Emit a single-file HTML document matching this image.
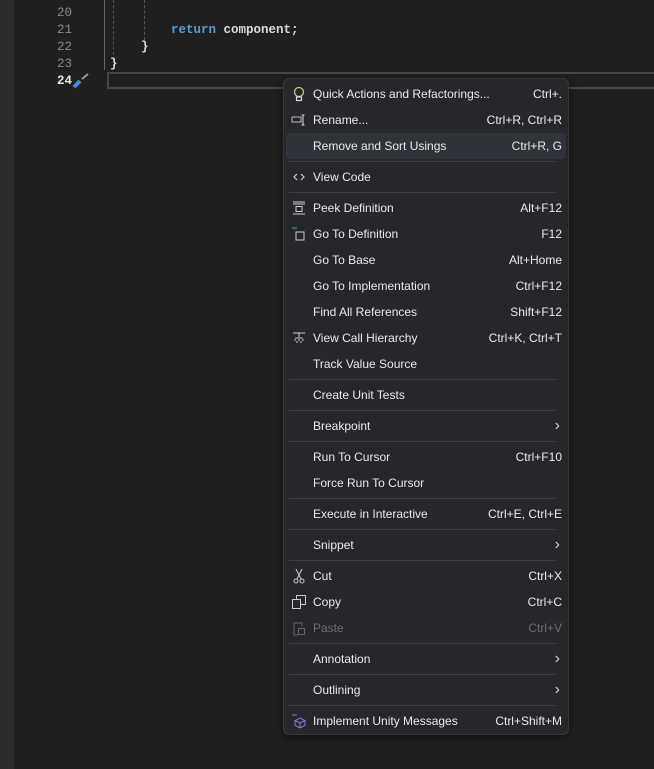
<!DOCTYPE html>
<html><head><meta charset="utf-8"><style>
*{margin:0;padding:0;box-sizing:border-box}
body{width:654px;height:769px;background:#1f1f1f;position:relative;overflow:hidden;font-family:"Liberation Sans",sans-serif}
.strip{position:absolute;left:0;top:0;width:14px;height:769px;background:#2b2b2b}
.ln{position:absolute;left:40px;width:32px;text-align:right;font:12.5px "Liberation Mono",monospace;color:#8a8a8a}
.code{position:absolute;font:bold 12.5px "Liberation Mono",monospace;color:#dcdcdc;white-space:pre}
.curline{position:absolute;left:107px;top:72px;width:560px;height:17px;border:2px solid #464646}
.menu{position:absolute;left:283px;top:78px;width:286px;height:657px;background:#25272b;border:1px solid #34363a;border-radius:6px;padding-top:2px;box-shadow:0 2px 8px rgba(0,0,0,.5)}
.it{position:relative;height:26px;line-height:26px;font-size:12px;color:#eaeaea;padding-left:29px}
.it .k{position:absolute;right:6px;top:0}
.it.dis{color:#6e6e6e}
.it.hl{background:#31333a;border-radius:4px;margin:0 2px;padding-left:27px}
.it.hl .k{right:4px}
.sep{height:1px;background:#3c3e43;margin:2px 12px 2px 5px}
.ic{position:absolute;left:7px;top:5px;width:16px;height:16px}
.ar{position:absolute;right:8px;top:0;color:#cfcfcf;font-size:16px}
</style></head><body>
<div class="strip"></div>
<div class="ln" style="top:6px">20</div>
<div class="ln" style="top:23px">21</div>
<div class="ln" style="top:40px">22</div>
<div class="ln" style="top:57px">23</div>
<div class="ln" style="top:74px;color:#e6e6e6;font-weight:bold">24</div>
<svg style="position:absolute;left:72px;top:73px" width="18" height="16"><path d="M2 14 L8 8" stroke="#4a8ad8" stroke-width="4"/><path d="M10 6 L16 1" stroke="#9a9a9a" stroke-width="2"/></svg>
<div style="position:absolute;left:104px;top:0;width:1px;height:70px;border-left:1px solid #666"></div>
<div style="position:absolute;left:113px;top:0;height:55px;border-left:1px dashed #555"></div>
<div style="position:absolute;left:144px;top:0;height:40px;border-left:1px dashed #555"></div>
<div class="code" style="top:23px;left:171px"><span style="color:#569cd6">return</span> component;</div>
<div class="code" style="top:40px;left:141px">}</div>
<div class="code" style="top:57px;left:110px">}</div>
<div class="curline"></div>
<div class="menu">
<div class="it"><svg class="ic" viewBox="0 0 16 16"><circle cx="8" cy="6" r="4.5" fill="none" stroke="#e0c070" stroke-width="1.3"/><rect x="5.5" y="11" width="5" height="3.5" fill="none" stroke="#ddd" stroke-width="1.2"/></svg>Quick Actions and Refactorings...<span class="k">Ctrl+.</span></div>
<div class="it"><svg class="ic" viewBox="0 0 16 16"><rect x="1" y="5" width="9" height="5" fill="none" stroke="#bbb"/><path d="M12 3v10M10.5 3h3M10.5 13h3" stroke="#ddd"/></svg>Rename...<span class="k">Ctrl+R, Ctrl+R</span></div>
<div class="it hl">Remove and Sort Usings<span class="k">Ctrl+R, G</span></div>
<div class="sep"></div>
<div class="it"><svg class="ic" viewBox="0 0 16 16"><path d="M6 5l-3 3 3 3M10 5l3 3-3 3" fill="none" stroke="#ccc" stroke-width="1.2"/></svg>View Code</div>
<div class="sep"></div>
<div class="it"><svg class="ic" viewBox="0 0 16 16"><path d="M2 2h12M2 14h12M2 4h12" stroke="#ccc"/><rect x="5" y="6.5" width="6" height="5" fill="none" stroke="#ccc"/></svg>Peek Definition<span class="k">Alt+F12</span></div>
<div class="it"><svg class="ic" viewBox="0 0 16 16"><path d="M1 2h5" stroke="#4a9ae0"/><rect x="5" y="6" width="8" height="8" fill="none" stroke="#ccc"/></svg>Go To Definition<span class="k">F12</span></div>
<div class="it">Go To Base<span class="k">Alt+Home</span></div>
<div class="it">Go To Implementation<span class="k">Ctrl+F12</span></div>
<div class="it">Find All References<span class="k">Shift+F12</span></div>
<div class="it"><svg class="ic" viewBox="0 0 16 16"><path d="M2 3h12M8 3v4M4 8h8M3 10h2M7 10h2M11 10h2M5 12h2M9 12h2" stroke="#ccc"/></svg>View Call Hierarchy<span class="k">Ctrl+K, Ctrl+T</span></div>
<div class="it">Track Value Source</div>
<div class="sep"></div>
<div class="it">Create Unit Tests</div>
<div class="sep"></div>
<div class="it">Breakpoint<span class="ar">&#8250;</span></div>
<div class="sep"></div>
<div class="it">Run To Cursor<span class="k">Ctrl+F10</span></div>
<div class="it">Force Run To Cursor</div>
<div class="sep"></div>
<div class="it">Execute in Interactive<span class="k">Ctrl+E, Ctrl+E</span></div>
<div class="sep"></div>
<div class="it">Snippet<span class="ar">&#8250;</span></div>
<div class="sep"></div>
<div class="it"><svg class="ic" viewBox="0 0 16 16"><path d="M5 1l5 10M11 1L6 11" stroke="#ccc"/><circle cx="5" cy="13" r="2" fill="none" stroke="#ccc"/><circle cx="11" cy="13" r="2" fill="none" stroke="#ccc"/></svg>Cut<span class="k">Ctrl+X</span></div>
<div class="it"><svg class="ic" viewBox="0 0 16 16"><rect x="1.5" y="5.5" width="8" height="9" fill="none" stroke="#ccc"/><path d="M5.5 5.5V1.5h9v9h-5" fill="none" stroke="#ccc"/></svg>Copy<span class="k">Ctrl+C</span></div>
<div class="it dis"><svg class="ic" viewBox="0 0 16 16"><path d="M3 3h8v3M3 3v12h4" fill="none" stroke="#666"/><rect x="7.5" y="8.5" width="6" height="6" fill="none" stroke="#666"/></svg>Paste<span class="k">Ctrl+V</span></div>
<div class="sep"></div>
<div class="it">Annotation<span class="ar">&#8250;</span></div>
<div class="sep"></div>
<div class="it">Outlining<span class="ar">&#8250;</span></div>
<div class="sep"></div>
<div class="it"><svg class="ic" viewBox="0 0 16 16"><path d="M1 2h5" stroke="#4a9ae0"/><path d="M9 5l5 2.5v5L9 15l-5-2.5v-5z M4 7.5l5 2.5 5-2.5M9 10v5" fill="none" stroke="#a070d8"/></svg>Implement Unity Messages<span class="k">Ctrl+Shift+M</span></div>
</div>
</body></html>
